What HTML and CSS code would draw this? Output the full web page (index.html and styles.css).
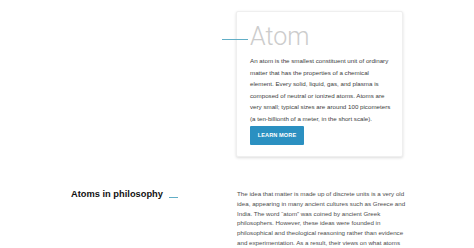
FILE: index.html
```html
<!DOCTYPE html>
<html lang="en">
  <head>
    <meta charset="UTF-8" />
    <meta name="viewport" content="width=device-width, initial-scale=1.0" />
    <title>Atom</title>
    <link rel="stylesheet" href="styles.css">
  </head>
  <body>
    <main class="page">
      <!-- Intro card -->
      <section class="intro">
        <article class="card">
          <span class="card-rule"></span>
          <h1 class="card-title">Atom</h1>
          <p class="card-text">An atom is the smallest constituent unit of ordinary matter that has the properties of a chemical element. Every solid, liquid, gas, and plasma is composed of neutral or ionized atoms. Atoms are very small; typical sizes are around 100 picometers (a ten-billionth of a meter, in the short scale).</p>
          <a class="button" href="#">LEARN MORE</a>
        </article>
      </section>

      <!-- Topic row -->
      <section class="topic">
        <h2 class="topic-title">Atoms in philosophy<span class="topic-rule"></span></h2>
        <p class="topic-text">The idea that matter is made up of discrete units is a very old idea, appearing in many ancient cultures such as Greece and India. The word “atom” was coined by ancient Greek philosophers. However, these ideas were founded in philosophical and theological reasoning rather than evidence and experimentation. As a result, their views on what atoms look like and how they behave were incorrect.</p>
      </section>
    </main>
  </body>
</html>
```

FILE: styles.css
```css
body {
  margin: 0;
  padding: 0;
  overflow: hidden;
  background-color: #fff;
  font-family: "Liberation Sans", Arial, sans-serif;
}

.page {
  height: 248px;
  overflow: hidden;
}

.intro {
  padding: 11px 0 0 236px;
}

.card {
  position: relative;
  width: 167px;
  box-sizing: border-box;
  padding: 10px 10px 11px 13px;
  border: 1px solid #efefef;
  border-radius: 2px;
  background-color: #fff;
  box-shadow: 0 1px 3px rgba(0, 0, 0, 0.14);
}

.card-rule {
  position: absolute;
  top: 27px;
  left: -15px;
  width: 26px;
  height: 1px;
  background-color: #62aec6;
}

.card-title {
  margin: 0 0 3px;
  font-family: Roboto, "Liberation Sans", sans-serif;
  font-weight: 300;
  font-size: 25px;
  line-height: 30px;
  color: #cccccc;
}

.card-text {
  margin: 0 0 2px;
  font-size: 6.2px;
  line-height: 11.5px;
  color: #3d3d3d;
}

.button {
  display: block;
  width: 54px;
  height: 19px;
  line-height: 19px;
  text-align: center;
  background-color: #2b90c1;
  color: white;
  font-size: 5.6px;
  font-weight: bold;
  letter-spacing: 0.1px;
  text-decoration: none;
  border-radius: 1px;
}

.topic {
  display: grid;
  grid-template-columns: 237px 172px;
  margin-top: 32px;
  align-items: start;
}

.topic-title {
  margin: 0;
  padding-left: 71px;
  font-size: 9.3px;
  line-height: 10.5px;
  font-weight: bold;
  color: #111;
}

.topic-rule {
  display: inline-block;
  width: 9px;
  height: 1px;
  margin-left: 6px;
  vertical-align: -1px;
  background-color: #62aec6;
}

.topic-text {
  margin: 0;
  font-size: 6.2px;
  line-height: 9.8px;
  color: #4d4d4d;
}
```
